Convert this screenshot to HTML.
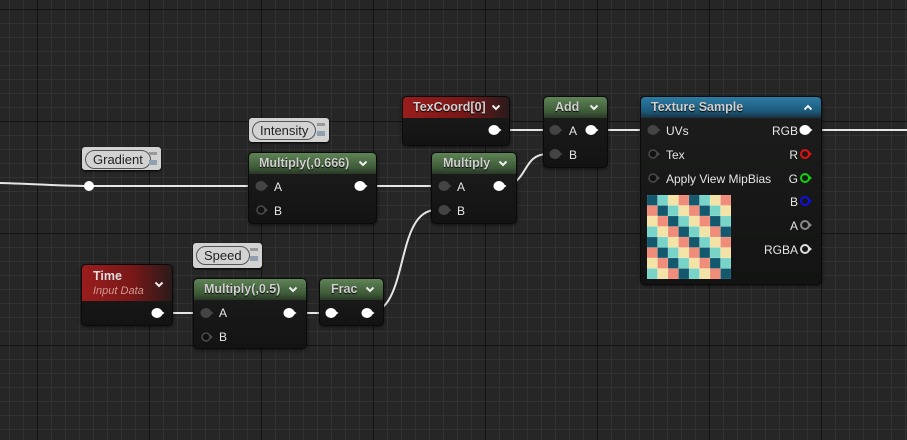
<!DOCTYPE html>
<html><head><meta charset="utf-8"><style>
html,body{margin:0;padding:0}
body{width:907px;height:440px;overflow:hidden;position:relative;background:#262626;font-family:"Liberation Sans",sans-serif}
.grid{position:absolute;inset:0;
background-image:
linear-gradient(to right,#131313 0,#131313 1px,transparent 1px),
linear-gradient(to bottom,#131313 0,#131313 1px,transparent 1px),
linear-gradient(to right,#323232 0,#323232 1px,transparent 1px),
linear-gradient(to bottom,#323232 0,#323232 1px,transparent 1px);
background-size:112px 112px,112px 112px,14px 14px,14px 14px;
background-position:37px 0,0 9px,9px 0,0 9px}
.node{position:absolute;background:linear-gradient(#1c1d1c,#121312);border:1px solid #0a0a0a;border-radius:5px;box-shadow:0 1px 3px rgba(0,0,0,.6);overflow:hidden}
.hd{height:21px;line-height:21px;font-size:12.5px;font-weight:bold;color:#cfcfcf;padding-left:10px;text-shadow:0 1px 1px #000;position:relative}
.g{background:linear-gradient(#5f8456,#3e5a38 70%,#2a3727)}
.r{background:linear-gradient(to right,#9a1d1d,#7a1818 55%,#2a1a1a)}
.b{background:linear-gradient(#2c7ca4,#1c5878 70%,#1a3040)}
.chev{position:absolute;right:8px;top:7px;width:10px;height:7px}
.lbl{position:absolute;font-size:12px;color:#e6e6e6}
.bub{position:absolute;background:#d2d2d2;border-radius:3px;box-shadow:0 1px 2px #000}
.bub span{position:absolute;left:3px;top:3px;border:1px solid #555;border-radius:10px;font-size:13px;color:#222;padding:1px 7px;line-height:15px}
.bub i{position:absolute;right:4px;width:8px;height:5px;background:#8fa0b0}
</style></head><body>
<div class="grid"></div>

<svg width="0" height="0" style="position:absolute"><defs><symbol id="ch" viewBox="0 0 10 7"><path d="M1.5,1.5 L5,5 L8.5,1.5" fill="none" stroke="#eee" stroke-width="2"/></symbol><symbol id="up" viewBox="0 0 10 7"><path d="M1.5,5.5 L5,2 L8.5,5.5" fill="none" stroke="#eee" stroke-width="2"/></symbol></defs></svg>

<svg width="907" height="440" style="position:absolute;left:0;top:0">
<g stroke="#e6e6e6" stroke-width="2" fill="none">
<path d="M0,183 C40,184 60,186 89,186 L258,186"/>
<path d="M361,186 L436,186"/>
<path d="M500,186 C530,186 520,154 548,154"/>
<path d="M495,130 L548,130"/>
<path d="M591,130 L650,130"/>
<path d="M806,130 L907,130"/>
<path d="M158,313 L203,313"/>
<path d="M290,313 L332,313"/>
<path d="M368,313 C410,313 394,210 436,210"/>
</g>
</svg>

<div class="bub" style="left:82px;top:147px;width:79px;height:23px"><span>Gradient</span><i style="top:5px;height:3px;background:#999"></i><i style="top:13px"></i></div>
<div class="bub" style="left:249px;top:118px;width:80px;height:24px"><span>Intensity</span><i style="top:5px;height:3px;background:#999"></i><i style="top:13px"></i></div>
<div class="bub" style="left:193px;top:243px;width:69px;height:25px"><span>Speed</span><i style="top:5px;height:3px;background:#999"></i><i style="top:13px"></i></div>

<div class="node" style="left:248px;top:152px;width:127px;height:70px"><div class="hd g">Multiply(,0.666)<svg class="chev"><use href="#ch"/></svg></div>
<span class="lbl" style="left:25px;top:27px">A</span><span class="lbl" style="left:25px;top:51px">B</span></div>
<div class="node" style="left:431px;top:152px;width:84px;height:70px"><div class="hd g" style="padding-left:11px">Multiply<svg class="chev"><use href="#ch"/></svg></div>
<span class="lbl" style="left:25px;top:27px">A</span><span class="lbl" style="left:25px;top:51px">B</span></div>
<div class="node" style="left:402px;top:96px;width:106px;height:48px"><div class="hd r">TexCoord[0]<svg class="chev"><use href="#ch"/></svg></div></div>
<div class="node" style="left:543px;top:96px;width:63px;height:70px"><div class="hd g" style="padding-left:11px">Add<svg class="chev"><use href="#ch"/></svg></div>
<span class="lbl" style="left:25px;top:27px">A</span><span class="lbl" style="left:25px;top:51px">B</span></div>
<div class="node" style="left:640px;top:96px;width:180px;height:187px"><div class="hd b">Texture Sample<svg class="chev"><use href="#up"/></svg></div>
<span class="lbl" style="left:25px;top:27px">UVs</span><span class="lbl" style="left:25px;top:51px">Tex</span><span class="lbl" style="left:25px;top:75px">Apply View MipBias</span>
<span class="lbl" style="right:23px;top:27px">RGB</span><span class="lbl" style="right:23px;top:51px">R</span><span class="lbl" style="right:23px;top:75px">G</span><span class="lbl" style="right:23px;top:98px">B</span><span class="lbl" style="right:23px;top:122px">A</span><span class="lbl" style="right:23px;top:146px">RGBA</span>
<svg width="84" height="84" style="position:absolute;left:6px;top:98px"><defs><pattern id="p" width="42" height="42" patternUnits="userSpaceOnUse">
<g stroke="#fff" stroke-opacity=".2" stroke-width=".6">
<rect x="0" y="0" width="10.5" height="10.5" fill="#14586e"/><rect x="10.5" y="0" width="10.5" height="10.5" fill="#78d3c8"/><rect x="21" y="0" width="10.5" height="10.5" fill="#f4e3a6"/><rect x="31.5" y="0" width="10.5" height="10.5" fill="#f08c7a"/>
<rect x="0" y="10.5" width="10.5" height="10.5" fill="#f08c7a"/><rect x="10.5" y="10.5" width="10.5" height="10.5" fill="#14586e"/><rect x="21" y="10.5" width="10.5" height="10.5" fill="#78d3c8"/><rect x="31.5" y="10.5" width="10.5" height="10.5" fill="#f4e3a6"/>
<rect x="0" y="21" width="10.5" height="10.5" fill="#f4e3a6"/><rect x="10.5" y="21" width="10.5" height="10.5" fill="#f08c7a"/><rect x="21" y="21" width="10.5" height="10.5" fill="#14586e"/><rect x="31.5" y="21" width="10.5" height="10.5" fill="#78d3c8"/>
<rect x="0" y="31.5" width="10.5" height="10.5" fill="#78d3c8"/><rect x="10.5" y="31.5" width="10.5" height="10.5" fill="#f4e3a6"/><rect x="21" y="31.5" width="10.5" height="10.5" fill="#f08c7a"/><rect x="31.5" y="31.5" width="10.5" height="10.5" fill="#14586e"/>
</g></pattern></defs><rect width="84" height="84" fill="url(#p)"/></svg>
</div>
<div class="node" style="left:81px;top:264px;width:90px;height:60px"><div class="r" style="height:36px;padding-left:11px;position:relative"><div style="font-size:12.5px;font-weight:bold;color:#ddd;padding-top:4px">Time</div><div style="font-size:11px;font-style:italic;color:#d09a90;padding-top:2px">Input Data</div><svg class="chev" style="top:16px"><use href="#ch"/></svg></div></div>
<div class="node" style="left:193px;top:278px;width:112px;height:69px"><div class="hd g">Multiply(,0.5)<svg class="chev"><use href="#ch"/></svg></div>
<span class="lbl" style="left:25px;top:27px">A</span><span class="lbl" style="left:25px;top:51px">B</span></div>
<div class="node" style="left:319px;top:278px;width:63px;height:46px"><div class="hd g" style="padding-left:11px">Frac<svg class="chev"><use href="#ch"/></svg></div></div>

<svg width="907" height="440" style="position:absolute;left:0;top:0">
<defs>
<g id="o"><ellipse cx="0" cy="0" rx="5.5" ry="5" fill="#fff"/><path d="M4,-2.5 L7.5,0 L4,2.5Z" fill="#fff"/></g>
<g id="c"><ellipse cx="0" cy="0" rx="5.5" ry="5" fill="#444"/><path d="M4,-2.5 L7.5,0 L4,2.5Z" fill="#444"/></g>
<g id="e"><circle cx="0" cy="0" r="4" fill="#111" stroke="#4a4a4a" stroke-width="1.5"/><path d="M4,-2.5 L7,0 L4,2.5Z" fill="#4a4a4a"/></g>
</defs>
<circle cx="89" cy="186" r="5" fill="#fff"/>
<use href="#c" x="261" y="186"/><use href="#e" x="261" y="210"/><use href="#o" x="360" y="186"/>
<use href="#c" x="444" y="186"/><use href="#c" x="444" y="210"/><use href="#o" x="499" y="186"/>
<use href="#o" x="494" y="130"/>
<use href="#c" x="555" y="130"/><use href="#c" x="555" y="154"/><use href="#o" x="591" y="130"/>
<use href="#c" x="653" y="130"/><use href="#e" x="653" y="154"/><use href="#e" x="653" y="178"/>
<use href="#o" x="805" y="130"/>
<g fill="none" stroke-width="2"><circle cx="805" cy="154" r="4" stroke="#e01010"/><circle cx="805" cy="178" r="4" stroke="#10d010"/><circle cx="805" cy="201" r="4" stroke="#1010e0"/><circle cx="805" cy="225" r="4" stroke="#888"/><circle cx="805" cy="249" r="4" stroke="#ddd"/></g>
<g><path d="M809,151.5 L812,154 L809,156.5Z" fill="#e01010"/><path d="M809,175.5 L812,178 L809,180.5Z" fill="#10d010"/><path d="M809,198.5 L812,201 L809,203.5Z" fill="#1010e0"/><path d="M809,222.5 L812,225 L809,227.5Z" fill="#888"/><path d="M809,246.5 L812,249 L809,251.5Z" fill="#ddd"/></g>
<use href="#o" x="157" y="313"/>
<use href="#c" x="206" y="313"/><use href="#e" x="206" y="337"/><use href="#o" x="289" y="313"/>
<use href="#o" x="331" y="313"/><use href="#o" x="367" y="313"/>
</svg>
</body></html>
